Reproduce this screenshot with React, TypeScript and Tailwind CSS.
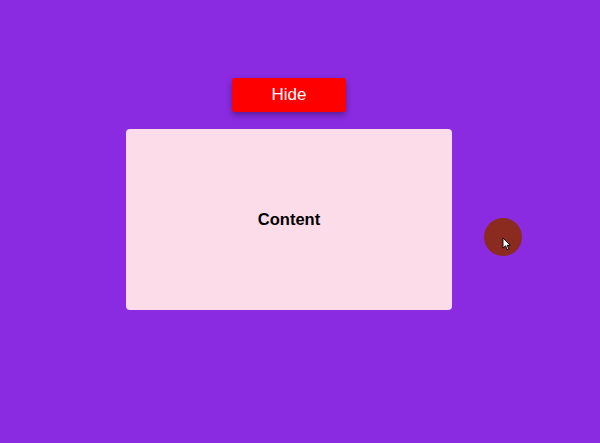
import React from "react";

export default function App() {
  return (
    <div className="w-[600px] h-[443px] bg-[#8a2be2] overflow-hidden" style={{ fontFamily: '"Liberation Sans", Arial, sans-serif' }}>
      <div className="flex items-start pt-[78px] pl-[126px]">
        <div className="flex flex-col items-center w-[326px] gap-[17px]">
          <button className="w-[114px] h-[34px] bg-[#ff0000] text-white text-[17px] rounded-[3px] shadow-[0_3px_6px_rgba(0,0,0,0.35)] flex items-center justify-center">
            Hide
          </button>
          <div className="w-[326px] h-[181px] bg-[#fddcea] rounded-[4px] flex items-center justify-center">
            <span className="text-[16.5px] font-bold text-black">Content</span>
          </div>
        </div>
        <div className="ml-[32px] mt-[140px] relative">
          <div className="w-[38px] h-[38px] rounded-full bg-[#8b2a1f]" />
          <svg className="absolute left-[18px] top-[19px]" width="10" height="14" viewBox="0 0 10 14">
            <path d="M1 1 L1 11 L3.5 8.8 L5.3 12.6 L6.8 11.9 L5.1 8.3 L8.3 8.3 Z" fill="white" stroke="black" strokeWidth="0.9" strokeLinejoin="round" />
          </svg>
        </div>
      </div>
    </div>
  );
}
